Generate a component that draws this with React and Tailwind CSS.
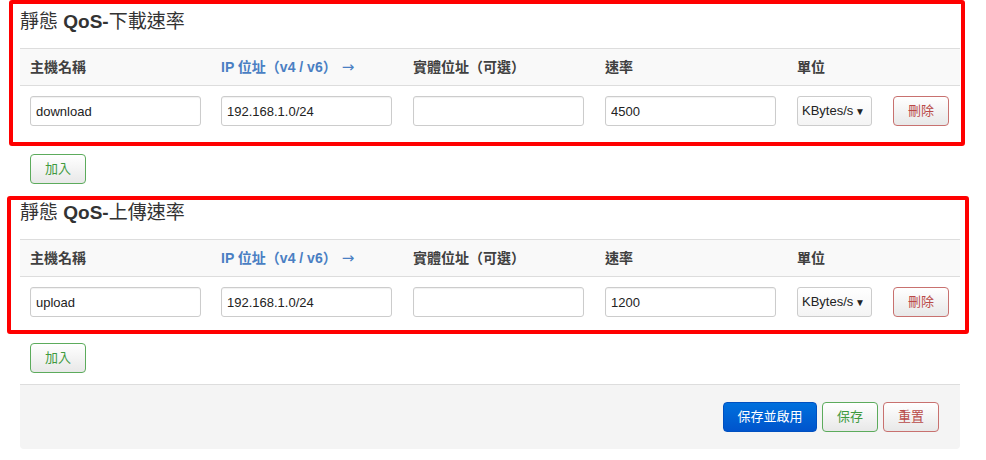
import React from 'react';

const font = { fontFamily: '"Liberation Sans", "Noto Sans CJK TC", sans-serif' };

const columns = [
  { label: '主機名稱' },
  { label: 'IP 位址（v4 / v6）', link: true },
  { label: '實體位址（可選）' },
  { label: '速率' },
  { label: '單位' },
  { label: '' },
];

const gridCols = 'grid grid-cols-[191px_192px_192px_192px_96px_1fr]';

const inputClass =
  'h-[30px] w-[171px] rounded-[3px] border border-[#cccccc] bg-white px-[5px] text-[13px] text-[#222] shadow-[inset_0_1px_1px_rgba(0,0,0,0.06)] outline-none';

const btnBase =
  'inline-flex h-[30px] items-center justify-center rounded-[4px] border text-[13px] bg-gradient-to-b from-white to-[#e8e8e8]';

const QosTable = ({ host, ip, rate }) => (
  <div>
    {/* Header row */}
    <div className={`${gridCols} h-[38px] items-center border-y border-[#dddddd] bg-[#f9f9f9]`}>
      {columns.map((col, i) => (
        <div
          key={i}
          className={`flex items-center px-[10px] text-[14px] font-bold ${col.link ? 'text-[#4a7fc3]' : 'text-[#404040]'}`}
        >
          {col.label}
          {col.link && (
            <span className="ml-[5px] text-[15px] font-normal" style={{ fontFamily: '"DejaVu Sans", sans-serif' }}>
              →
            </span>
          )}
        </div>
      ))}
    </div>

    {/* Data row */}
    <div className={`${gridCols} items-center pt-[10px] pb-[10px]`}>
      <div className="px-[10px]">
        <input className={inputClass} defaultValue={host} />
      </div>
      <div className="px-[10px]">
        <input className={inputClass} defaultValue={ip} />
      </div>
      <div className="px-[10px]">
        <input className={inputClass} defaultValue="" />
      </div>
      <div className="px-[10px]">
        <input className={inputClass} defaultValue={rate} />
      </div>
      <div className="px-[10px]">
        <div className="flex h-[30px] w-[75px] items-center justify-between rounded-[3px] border border-[#cccccc] bg-gradient-to-b from-white to-[#f4f4f4] pl-[4px] pr-[6px] text-[13px] text-[#222]">
          <span>KBytes/s</span>
          <span className="text-[10px]">▼</span>
        </div>
      </div>
      <div className="px-[10px]">
        <button className={`${btnBase} w-[56px] border-[#c8716f] text-[#b94a48]`}>刪除</button>
      </div>
    </div>
  </div>
);

const Heading = ({ children }) => (
  <h2 className="text-[19px] leading-[26px] text-[#333]">
    靜態 <span className="font-bold">QoS-</span>
    {children}
  </h2>
);

const AddButton = () => (
  <div className="px-[10px]">
    <button className={`${btnBase} w-[56px] border-[#5cab5c] text-[#3f9a3f]`}>加入</button>
  </div>
);

export default function App() {
  return (
    <div className="min-h-screen bg-white" style={font}>
      <div className="w-[940px] ml-[20px]">
        {/* Download section */}
        <div className="-ml-[11px] -mr-[5px] rounded-[3px] border-4 border-[#ff0000] pl-[7px] pr-[1px] pt-[5px] pb-[6px]">
          <Heading>下載速率</Heading>
          <div className="mt-[13px]">
            <QosTable host="download" ip="192.168.1.0/24" rate="4500" />
          </div>
        </div>
        <div className="mt-[8px]">
          <AddButton />
        </div>

        {/* Upload section */}
        <div className="mt-[12px] -ml-[13px] -mr-[9px] rounded-[3px] border-4 border-[#ff0000] pl-[9px] pr-[5px] pb-[3px]">
          <Heading>上傳速率</Heading>
          <div className="mt-[13px]">
            <QosTable host="upload" ip="192.168.1.0/24" rate="1200" />
          </div>
        </div>
        <div className="mt-[9px]">
          <AddButton />
        </div>

        {/* Footer actions */}
        <div className="mt-[11px] flex justify-end gap-[5px] rounded-b-[4px] border-t border-[#dddddd] bg-[#f4f4f4] pt-[17px] pb-[17px] pr-[21px]">
          <button className="inline-flex h-[30px] w-[94px] items-center justify-center rounded-[4px] border border-[#0050c0] bg-gradient-to-b from-[#0070dd] to-[#0054cc] text-[13px] text-white">
            保存並啟用
          </button>
          <button className={`${btnBase} w-[56px] border-[#5cab5c] text-[#3f9a3f]`}>保存</button>
          <button className={`${btnBase} w-[56px] border-[#c8716f] text-[#b94a48]`}>重置</button>
        </div>
      </div>
    </div>
  );
}
